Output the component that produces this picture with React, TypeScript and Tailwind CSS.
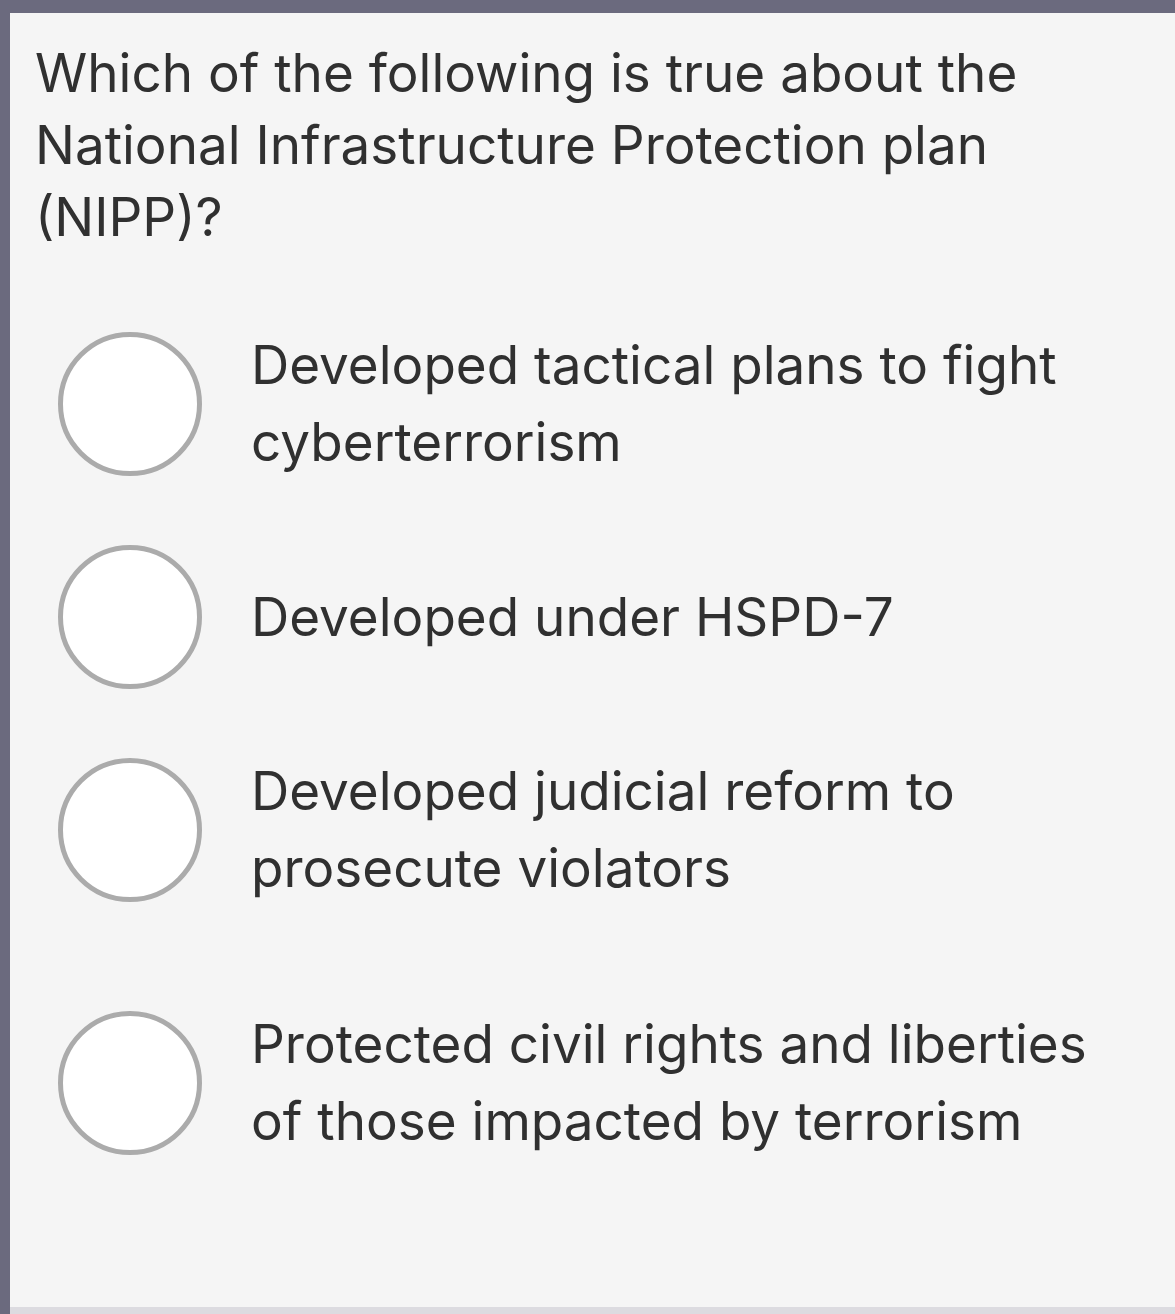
import React from "react";

type Option = {
  id: string;
  label: string;
};

const options: Option[] = [
  { id: "a", label: "Developed tactical plans to fight cyberterrorism" },
  { id: "b", label: "Developed under HSPD-7" },
  { id: "c", label: "Developed judicial reform to prosecute violators" },
  { id: "d", label: "Protected civil rights and liberties of those impacted by terrorism" },
];

const Radio = () => (
  <span className="block w-[144px] h-[144px] shrink-0 rounded-full border-[5px] border-[#ababab] bg-white" />
);

export default function App() {
  return (
    <div className="w-[1175px] h-[1314px] bg-[#6b6a7e] pt-[13px] pl-[10px] overflow-hidden font-['Inter',_'Noto_Sans',_sans-serif]">
      <div className="flex flex-col h-full bg-[#f5f5f5] text-[#303030]">
        <h1 className="pl-[25px] pr-[120px] pt-[24px] text-[53px] leading-[72px] font-normal">
          Which of the following is true about the National Infrastructure Protection plan (NIPP)?
        </h1>

        {/* options */}
        <ul className="flex flex-col mt-[74px]">
          {options.map((o, i) => (
            <li
              key={o.id}
              className={`flex items-center gap-[49px] pl-[48px] pr-[60px] ${
                i === 0 ? "" : i === 3 ? "mt-[99px]" : "mt-[64px]"
              }`}
            >
              <Radio />
              <span className="text-[53px] leading-[77px]">{o.label}</span>
            </li>
          ))}
        </ul>

        <div className="mt-auto h-[7px] bg-[#dcdbe0]" />
      </div>
    </div>
  );
}
